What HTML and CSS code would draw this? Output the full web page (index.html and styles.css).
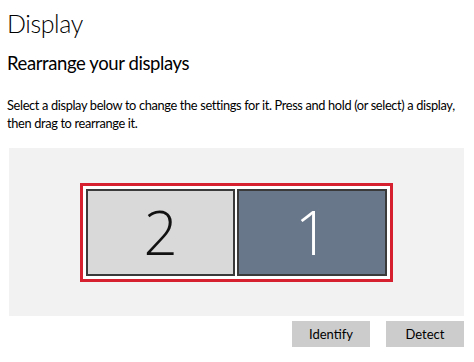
FILE: index.html
```html
<!DOCTYPE html>
<html lang="en">
<head>
  <meta charset="UTF-8">
  <title>Display</title>
  <link rel="stylesheet" href="styles.css">
</head>
<body>
  <div class="settings-page">
    <h1 class="page-title">Display</h1>
    <h2 class="section-title">Rearrange your displays</h2>
    <p class="section-text">Select a display below to change the settings for it. Press and hold (or select) a display, then drag to rearrange it.</p>
    <div class="arrange-area">
      <div class="monitor-group">
        <div class="monitor monitor-secondary">2</div>
        <div class="monitor monitor-primary">1</div>
      </div>
    </div>
    <div class="button-row">
      <button class="btn">Identify</button>
      <button class="btn">Detect</button>
    </div>
  </div>
</body>
</html>
```

FILE: styles.css
```css
* {
  margin: 0;
  padding: 0;
  box-sizing: border-box;
}
body {
  background: #ffffff;
  color: #000000;
  font-family: Lato, 'Open Sans', sans-serif;
}
.settings-page {
  width: 474px;
  padding: 6px 10px 0 7px;
}
.page-title {
  font-weight: 300;
  font-size: 25px;
  line-height: 34px;
  letter-spacing: -0.4px;
}
.section-title {
  font-weight: 400;
  font-size: 18.5px;
  line-height: 26px;
  margin-top: 10px;
  letter-spacing: -0.4px;
}
.section-text {
  width: 462px;
  font-size: 12.8px;
  line-height: 18px;
  margin-top: 20px;
  letter-spacing: -0.35px;
}
.arrange-area {
  margin: 16px 0 0 2px;
  width: 455px;
  height: 168px;
  background: #f2f2f2;
  display: flex;
  justify-content: center;
  align-items: center;
}
.monitor-group {
  display: flex;
  gap: 2px;
  padding: 3px;
  border: 3px solid #d6202f;
  background: #ffffff;
  margin-top: 1px;
}
.monitor {
  width: 149px;
  height: 87px;
  border: 2px solid #3a3a3a;
  display: flex;
  justify-content: center;
  align-items: center;
  font-family: 'Open Sans', sans-serif;
  font-size: 60px;
  font-weight: 300;
  padding-bottom: 2px;
}
.monitor-secondary {
  background: #d9d9d9;
  color: #111111;
}
.monitor-primary {
  width: 150px;
  background: #68778a;
  color: #ffffff;
}
.button-row {
  display: flex;
  justify-content: flex-end;
  gap: 16px;
  margin-top: 5px;
}
.btn {
  width: 78px;
  height: 26px;
  border: none;
  background: #cccccc;
  color: #000000;
  font-family: Lato, 'Open Sans', sans-serif;
  font-size: 13px;
}
```
